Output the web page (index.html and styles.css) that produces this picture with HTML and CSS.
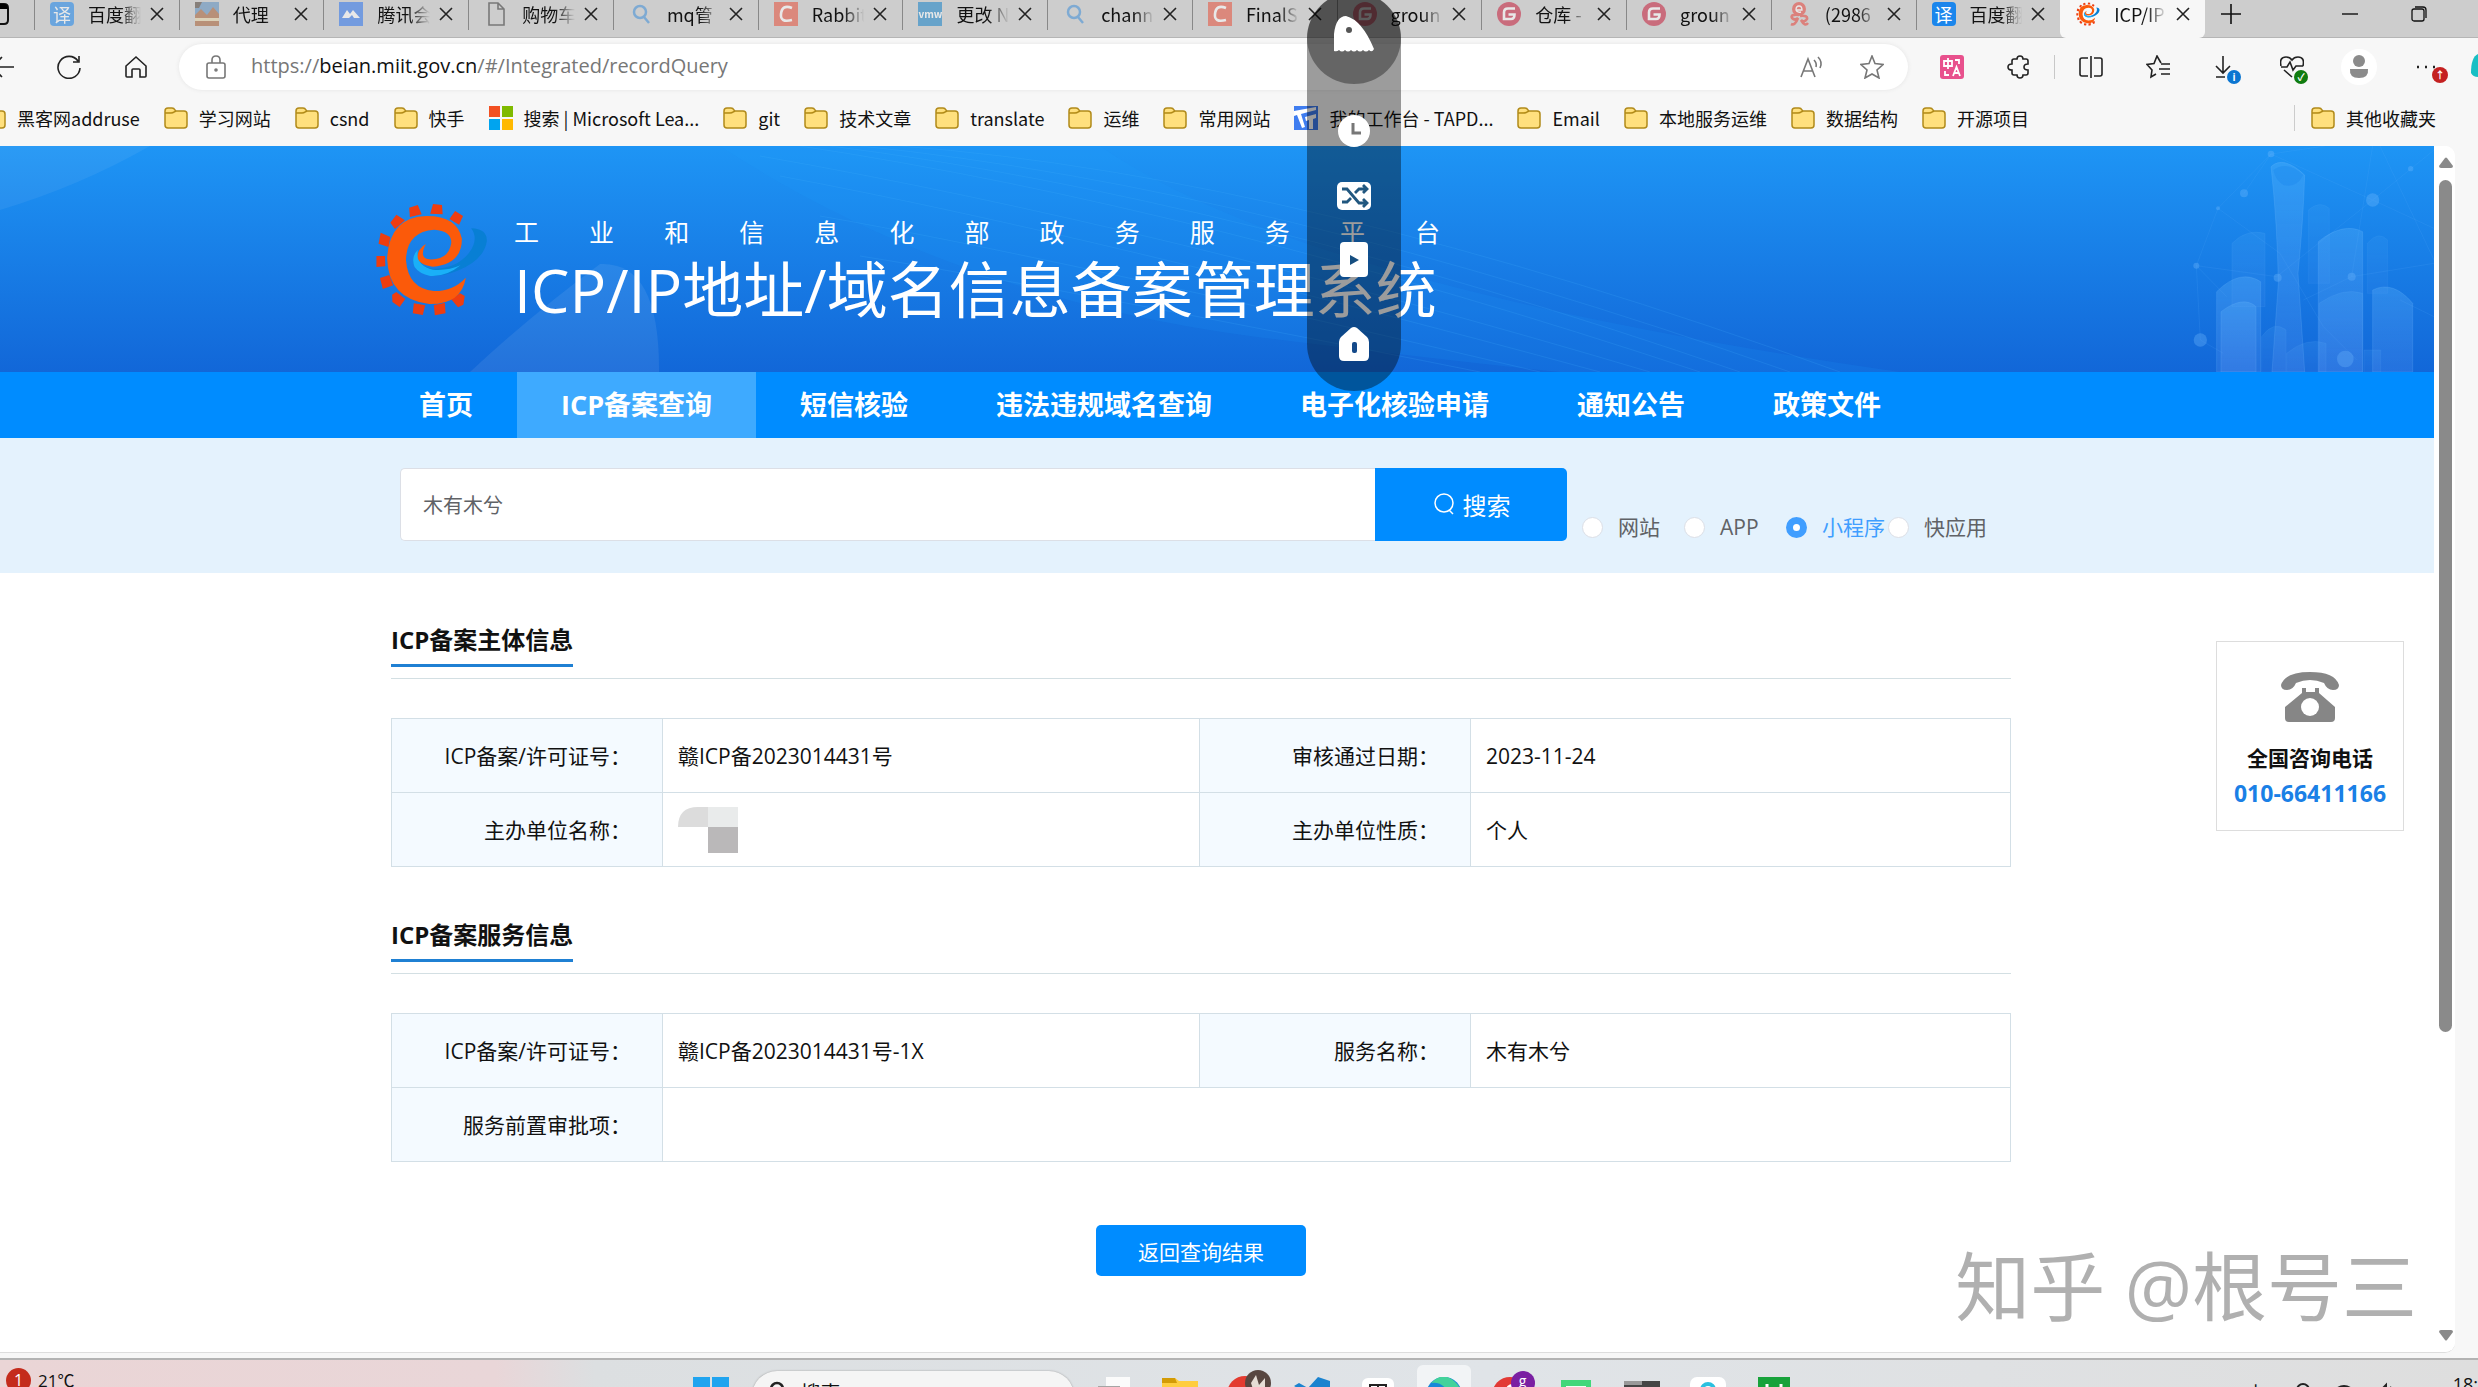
FILE: index.html
```html
<!DOCTYPE html>
<html lang="zh">
<head>
    <meta charset="UTF-8">
    <title>ICP/IP地址/域名信息备案管理系统</title>
    <link rel="stylesheet" href="styles.css">
</head>
<body>
<svg class="defs" aria-hidden="true">
    <symbol id="close" viewBox="0 0 14 14"><path d="M1 1L13 13M13 1L1 13" fill="none" stroke="#222" stroke-width="1.6"/></symbol>
    <symbol id="folder" viewBox="0 0 24 22"><path d="M1 4Q1 1 4 1H8Q10 1 11 3L12 4H20Q23 4 23 7V18Q23 21 20 21H4Q1 21 1 18Z" fill="#ffe07e" stroke="#b18a1a" stroke-width="1.5"/><path d="M1 6H7Q9 6 10 5L12 4" fill="#f8cf45" stroke="#b18a1a" stroke-width="1.5"/></symbol>
    <symbol id="glass" viewBox="0 0 24 24"><circle cx="11" cy="10" r="6" fill="none" stroke="#3f8fd8" stroke-width="2.5"/><path d="M15 15L20 21" stroke="#3f8fd8" stroke-width="2.5"/></symbol>
    <symbol id="gitee" viewBox="0 0 24 24"><circle cx="12" cy="12" r="12" fill="#c71d3a"/><path d="M18 6.500H11Q7 6.500 7 10.500V17H14Q17.500 17 17.500 12.500H11.500" fill="none" stroke="#fff" stroke-width="2.600"/></symbol>
    <symbol id="csdn" viewBox="0 0 24 24"><rect width="24" height="24" fill="#e8503a"/><path d="M18 6Q8 2 7 12Q6 21 18 18" fill="none" stroke="#fff" stroke-width="2.600"/></symbol>
    <symbol id="logo" viewBox="70 155 320 345" preserveAspectRatio="none">
        <g fill="#ee3d10">
            <path d="M166 172L190 164L201 192L168 200Z"/><path d="M233 161L258 164L260 192L225 190Z"/><path d="M295 182L317 197L306 223L279 206Z"/>
            <path d="M130 193L154 210L126 236L113 217Z"/><path d="M86 247L113 260L108 290L80 280Z"/><path d="M74 317L98 317L99 348L74 350Z"/>
            <path d="M84 383L110 374L121 405L92 416Z"/><path d="M118 433L130 425L155 446L139 470L119 455Z"/><path d="M179 459L211 465L204 494L176 489Z"/>
            <path d="M235 464L266 458L268 489L238 495Z"/><path d="M284 447L309 429L322 437L318 463L303 471Z"/>
        </g>
        <path d="M340 234Q384 235 384 272Q376 330 300 362Q220 395 181 350Q170 320 190 298Q186 348 232 355Q300 356 335 306Q362 266 340 234Z" fill="#087fd4"/>
        <path d="M181 350Q170 320 190 298Q186 348 232 358Q275 362 310 345Q270 380 225 377Q194 370 181 350Z" fill="#1ab0f8"/>
        <path d="M325 382Q312 463 222 461Q108 445 104 325Q110 200 214 197Q300 196 314 265Q314 342 232 349Q176 340 194 300Q202 286 213 281Q192 323 222 327Q276 330 284 279Q286 241 236 238Q158 244 157 330Q163 415 235 422Q289 423 325 382Z" fill="#fb5a0a"/>
    </symbol>
</svg>

<div class="tabs">
    <div class="tabs-edge"><svg width="9" height="26" viewBox="0 0 9 26"><path d="M0 4H4Q8 4 8 8V20Q8 24 4 24H0" fill="none" stroke="#111" stroke-width="2"/><path d="M0 4H4Q8 4 8 9H0Z"/></svg></div>
    <div class="tab"><span class="fav yi">译</span><span class="name">百度翻</span><button aria-label="关闭"><svg><use href="#close"/></svg></button></div>
    <div class="tab"><svg class="fav" viewBox="0 0 24 24"><rect width="24" height="24" fill="#5b8fc0"/><path d="M0 13L6 7L12 13L18 5L24 12V24H0Z" fill="#a75f33"/><path d="M0 16H24V19H0Z" fill="#e8d6a8"/><path d="M0 0H7L4 6H0Z" fill="#4d4038"/></svg><span class="name">代理</span><button aria-label="关闭"><svg><use href="#close"/></svg></button></div>
    <div class="tab"><svg class="fav" viewBox="0 0 24 24"><rect width="24" height="24" fill="#2b73ee"/><path d="M3 16L8 8L11 12L14 8L21 16H15L13 13L10 16Z" fill="#fff"/></svg><span class="name">腾讯会</span><button aria-label="关闭"><svg><use href="#close"/></svg></button></div>
    <div class="tab"><svg class="fav" viewBox="0 0 24 24"><path d="M5 1H14L20 7V23H5ZM14 1V7H20" fill="none" stroke="#333" stroke-width="1.600"/></svg><span class="name">购物车</span><button aria-label="关闭"><svg><use href="#close"/></svg></button></div>
    <div class="tab"><svg class="fav"><use href="#glass"/></svg><span class="name">mq管</span><button aria-label="关闭"><svg><use href="#close"/></svg></button></div>
    <div class="tab"><svg class="fav"><use href="#csdn"/></svg><span class="name">Rabbit</span><button aria-label="关闭"><svg><use href="#close"/></svg></button></div>
    <div class="tab"><span class="fav vmw">vmw</span><span class="name">更改 N</span><button aria-label="关闭"><svg><use href="#close"/></svg></button></div>
    <div class="tab"><svg class="fav"><use href="#glass"/></svg><span class="name">chann</span><button aria-label="关闭"><svg><use href="#close"/></svg></button></div>
    <div class="tab"><svg class="fav"><use href="#csdn"/></svg><span class="name">FinalS</span><button aria-label="关闭"><svg><use href="#close"/></svg></button></div>
    <div class="tab"><svg class="fav"><use href="#gitee"/></svg><span class="name">groun</span><button aria-label="关闭"><svg><use href="#close"/></svg></button></div>
    <div class="tab"><svg class="fav"><use href="#gitee"/></svg><span class="name">仓库 -</span><button aria-label="关闭"><svg><use href="#close"/></svg></button></div>
    <div class="tab"><svg class="fav"><use href="#gitee"/></svg><span class="name">groun</span><button aria-label="关闭"><svg><use href="#close"/></svg></button></div>
    <div class="tab"><svg class="fav" viewBox="0 0 24 24"><circle cx="12" cy="7" r="7" fill="#e8443a"/><path d="M9 8H15Q15 4 12 4Q9 4 9 8Q10 11 14 10" fill="none" stroke="#fff" stroke-width="1.300"/><path d="M12 13Q3 12 5 16Q8 19 11 16Q8 24 4 22M13 14Q21 13 20 17Q17 21 14 18Q18 25 21 21" fill="none" stroke="#e8443a" stroke-width="2.600"/></svg><span class="name">(2986</span><button aria-label="关闭"><svg><use href="#close"/></svg></button></div>
    <div class="tab lit"><span class="fav yi">译</span><span class="name">百度翻</span><button aria-label="关闭"><svg><use href="#close"/></svg></button></div>
    <div class="tab active"><svg class="fav"><use href="#logo"/></svg><span class="name">ICP/IP</span><button aria-label="关闭"><svg><use href="#close"/></svg></button></div>
    <div class="window-btns">
        <button aria-label="新建标签页"><svg width="22" height="22" viewBox="0 0 22 22"><path d="M11 1V21M1 11H21" stroke="#111" stroke-width="1.600"/></svg></button>
        <button class="min" aria-label="最小化"><svg width="16" height="16" viewBox="0 0 16 16"><path d="M0 8H16" stroke="#111" stroke-width="1.400"/></svg></button>
        <button aria-label="还原"><svg width="16" height="16" viewBox="0 0 16 16"><rect x="1" y="3" width="12" height="12" rx="2" fill="none" stroke="#111" stroke-width="1.300"/><path d="M4 1H12Q15 1 15 4V12" fill="none" stroke="#111" stroke-width="1.300"/></svg></button>
    </div>
</div>

<div class="toolbar">
    <button aria-label="后退"><svg viewBox="0 0 24 24"><path d="M24 12H2M12 2L2 12L12 22"/></svg></button>
    <button aria-label="刷新"><svg viewBox="0 0 24 24"><path d="M21 6A11 11 0 1 0 23 13M22 1V7H16"/></svg></button>
    <button aria-label="主页"><svg viewBox="0 0 24 24"><path d="M2 11L12 2L22 11V21Q22 22 21 22H16V15Q16 14 15 14H9Q8 14 8 15V22H3Q2 22 2 21Z"/></svg></button>
    <div class="address">
        <svg class="grey" viewBox="0 0 24 24"><rect x="3" y="8" width="18" height="15" rx="2"/><path d="M8 8V5Q8 1 12 1Q16 1 16 5V8"/><circle cx="12" cy="15" r="1"/></svg>
        <span class="url">https://<b>beian.miit.gov.cn</b>/#/Integrated/recordQuery</span>
        <button aria-label="朗读"><svg class="grey" viewBox="0 0 24 24"><path d="M1 22L8 4L15 22M3 16H13M14 5Q17 8 16 12M18 2Q23 7 20 13"/></svg></button>
        <button aria-label="收藏"><svg class="grey" viewBox="0 0 24 24"><path d="M12 1L15 8.500L23 9.500L17 15L19 23L12 19L5 23L7 15L1 9.500L9 8.500Z"/></svg></button>
    </div>
    <button aria-label="翻译"><svg viewBox="0 0 24 24"><rect width="24" height="24" rx="3" fill="#e8518d" stroke="none"/><path d="M4 6H12V11H4ZM8 3V14M15 5H19V9M5 16V20H9M13 21L16.500 12L20 21M14 18H19" stroke="#fff" stroke-width="1.800"/></svg></button>
    <button aria-label="扩展"><svg viewBox="0 0 24 24"><path d="M7 4H10Q10 1 13 1Q16 1 16 4H19Q21 4 21 6V9Q17 9 17 12Q17 15 21 15V18Q21 20 19 20H16Q16 23 13 23Q10 23 10 20H7Q5 20 5 18V15Q1 15 1 12Q1 9 5 9V6Q5 4 7 4Z"/></svg></button>
    <i class="line"></i>
    <button aria-label="分屏"><svg viewBox="0 0 24 24"><path d="M9 3H3Q1 3 1 5V19Q1 21 3 21H9M15 3H21Q23 3 23 5V19Q23 21 21 21H15M12 1V23"/></svg></button>
    <button aria-label="收藏夹"><svg viewBox="0 0 24 24"><path d="M15 8L11 1L8 8.500L1 9.500L6 15L5 22L10 19M15 9H24M13 14H24M15 19H24"/></svg></button>
    <button aria-label="下载"><svg viewBox="0 0 24 24"><path d="M10 1V18M3 11L10 18L17 11M3 22H12"/></svg><em class="dot blue">i</em></button>
    <button aria-label="浏览器概要"><svg viewBox="0 0 24 24"><path d="M1 11Q-1 2 6 2Q10 2 12 5Q14 2 18 2Q25 2 23 11M1 12H7L10 7L13 15L16 11H23M4 15L12 22"/></svg><em class="dot green">✓</em></button>
    <button aria-label="用户"><svg class="avatar" viewBox="0 0 36 36"><circle cx="18" cy="18" r="18" fill="#fff"/><circle cx="18" cy="12" r="6" fill="#8b8b8b"/><path d="M9 20H27Q28 29 18 29Q8 29 9 20Z" fill="#8b8b8b"/></svg></button>
    <button aria-label="更多"><svg viewBox="0 0 24 24"><path d="M3 12H5M11 12H13M19 12H21" stroke-width="2.500"/></svg><em class="dot red">↑</em></button>
    <svg class="copilot" width="19" height="36" viewBox="0 0 19 36"><path d="M19 5Q12 8 12 24Q14 28 19 28Z" fill="#19bfc4"/></svg>
</div>

<div class="bookmarks">
    <a href="#"><svg><use href="#folder"/></svg>黑客网addruse</a>
    <a href="#"><svg><use href="#folder"/></svg>学习网站</a>
    <a href="#"><svg><use href="#folder"/></svg>csnd</a>
    <a href="#"><svg><use href="#folder"/></svg>快手</a>
    <a href="#"><svg viewBox="0 0 24 24"><path d="M0 0H11V11H0Z" fill="#f25022"/><path d="M13 0H24V11H13Z" fill="#7fba00"/><path d="M0 13H11V24H0Z" fill="#00a4ef"/><path d="M13 13H24V24H13Z" fill="#ffb900"/></svg>搜索 | Microsoft Lea...</a>
    <a href="#"><svg><use href="#folder"/></svg>git</a>
    <a href="#"><svg><use href="#folder"/></svg>技术文章</a>
    <a href="#"><svg><use href="#folder"/></svg>translate</a>
    <a href="#"><svg><use href="#folder"/></svg>运维</a>
    <a href="#"><svg><use href="#folder"/></svg>常用网站</a>
    <a href="#"><svg viewBox="0 0 24 24"><rect width="24" height="24" fill="#3f7df0"/><path d="M0 5L22 1V4L7 8L11 21L8 22L3 9L0 10ZM11 11L22 8V12L19 13V23H15V14L12 15Z" fill="#fff"/></svg>我的工作台 - TAPD...</a>
    <a href="#"><svg><use href="#folder"/></svg>Email</a>
    <a href="#"><svg><use href="#folder"/></svg>本地服务运维</a>
    <a href="#"><svg><use href="#folder"/></svg>数据结构</a>
    <a href="#"><svg><use href="#folder"/></svg>开源项目</a>
    <a href="#" class="others"><svg><use href="#folder"/></svg>其他收藏夹</a>
</div>

<div class="view">
    <div class="page">
        <header class="banner">
            <svg class="waves" viewBox="0 0 2434 226" preserveAspectRatio="none">
                <path d="M470 226Q530 170 600 118Q660 115 659 226Z" fill="#fff" opacity=".08"/>
                <path d="M0 0H150Q80 40 0 64Z" fill="#fff" opacity=".06"/>
                <path d="M720 0Q950 150 1250 190Q1450 215 1560 226H1900Q1300 140 1100 0Z" fill="#22a5ff" opacity=".13"/>
                <g fill="none" stroke="#4ab8ff" opacity=".16">
                    <path d="M800 0Q1200 60 1700 226"/><path d="M830 0Q1230 50 1740 226"/><path d="M860 0Q1260 40 1790 226"/><path d="M760 10Q1160 80 1650 226"/><path d="M780 30Q1100 90 1600 226"/><path d="M900 0Q1300 30 1840 226"/><path d="M820 70Q1050 110 1540 226"/><path d="M860 110Q1050 140 1480 226"/>
                </g>
            </svg>
            <svg class="emblem"><use href="#logo"/></svg>
            <div class="titles">
                <p>工业和信息化部政务服务平台</p>
                <h1>ICP/IP地址/域名信息备案管理系统</h1>
            </div>
            <svg class="city" viewBox="0 18 882 678">
                <defs><linearGradient id="tower" x2="0" y2="1"><stop offset="0" stop-color="#6cc0ff" stop-opacity=".35"/><stop offset="1" stop-color="#7fa9ff" stop-opacity=".22"/></linearGradient></defs>
                <g stroke="#68b8ff" stroke-opacity=".25" stroke-width="2" fill="none">
                    <path d="M393 42L234 205L169 377L181 600L250 640M234 205L420 340L550 560L650 660M393 42L698 180L882 265M555 18L393 42M698 180L882 30M720 18L882 360M698 180L410 410L169 377M698 18L635 410L490 480M635 410L882 370M780 480L882 530M169 377L260 470M312 160L393 42"/>
                </g>
                <g fill="url(#tower)" stroke="#7fc4ff" stroke-opacity=".25" stroke-width="3">
                    <path d="M276 310Q320 265 375 280V500H276Z" opacity=".5"/><path d="M505 210Q540 180 568 205V430H505Z" opacity=".4"/><path d="M682 310Q715 270 743 300V460H682Z" opacity=".4"/>
                    <path d="M393 80Q430 45 494 105Q490 240 474 400L494 696H396L415 430Q412 250 393 80Z"/>
                    <path d="M230 455Q300 385 362 425V696H230Z"/><path d="M243 515Q310 465 348 500V696H243Z"/>
                    <path d="M535 305Q610 245 668 275V696H535Z"/><path d="M537 490Q610 440 668 460V696H537Z" opacity=".6"/>
                    <path d="M698 450Q760 420 818 490V696H698Z"/><path d="M365 590Q400 540 438 570V696H365Z" opacity=".5"/><path d="M440 640Q500 590 558 610V696H440Z" opacity=".5"/><path d="M672 630H722V696H672Z" opacity=".5"/>
                </g>
                <path d="M400 90Q440 60 490 105Q470 145 430 135Q405 120 400 90Z" fill="#1c85ea" opacity=".4"/>
                <g fill="#7dc0ff" opacity=".4"><circle cx="393" cy="42" r="10"/><circle cx="312" cy="160" r="12"/><circle cx="234" cy="205" r="6"/><circle cx="169" cy="377" r="9"/><circle cx="181" cy="600" r="20"/><circle cx="698" cy="180" r="20"/><circle cx="812" cy="86" r="8"/><circle cx="413" cy="413" r="12"/><circle cx="635" cy="410" r="12"/><circle cx="616" cy="657" r="25"/></g>
            </svg>
        </header>
        <nav class="nav">
            <a href="#">首页</a>
            <a href="#" class="current">ICP备案查询</a>
            <a href="#">短信核验</a>
            <a href="#">违法违规域名查询</a>
            <a href="#">电子化核验申请</a>
            <a href="#">通知公告</a>
            <a href="#">政策文件</a>
        </nav>
        <form class="search">
            <input type="text" value="木有木兮" aria-label="搜索内容">
            <button type="button"><svg width="24" height="24" viewBox="0 0 24 24"><circle cx="12" cy="11" r="9" fill="none" stroke="#fff" stroke-width="1.500"/><path d="M17 18L21 22" stroke="#fff" stroke-width="1.500"/></svg>搜索</button>
            <div class="types">
                <label><input type="radio" name="type">网站</label>
                <label><input type="radio" name="type">APP</label>
                <label><input type="radio" name="type" checked>小程序</label>
                <label><input type="radio" name="type">快应用</label>
            </div>
        </form>
        <main>
            <section>
                <div class="head"><h2>ICP备案主体信息</h2></div>
                <table>
                    <tr><th>ICP备案/许可证号：</th><td class="val">赣ICP备2023014431号</td><th>审核通过日期：</th><td>2023-11-24</td></tr>
                    <tr><th>主办单位名称：</th><td><svg class="mosaic" width="60" height="46" viewBox="0 0 60 46"><path d="M0 20Q0 0 20 0H30V20Z" fill="#dcdcdc"/><path d="M30 0H60V20H30Z" fill="#e9ebeb"/><path d="M30 20H60V46H30Z" fill="#bab8b9"/></svg></td><th>主办单位性质：</th><td>个人</td></tr>
                </table>
            </section>
            <section>
                <div class="head"><h2>ICP备案服务信息</h2></div>
                <table>
                    <tr><th>ICP备案/许可证号：</th><td class="val">赣ICP备2023014431号-1X</td><th>服务名称：</th><td>木有木兮</td></tr>
                    <tr><th>服务前置审批项：</th><td colspan="3"></td></tr>
                </table>
            </section>
            <button class="back">返回查询结果</button>
        </main>
        <aside class="phone">
            <svg width="58" height="50" viewBox="0 0 58 50"><path d="M0 13Q4 0 29 0Q54 0 58 13Q58 18 52 18Q46 18 43 11Q36 8 29 8Q22 8 15 11Q12 18 6 18Q0 18 0 13Z" fill="#868686"/><path d="M21 16H25V20H34V16H38V21L54 35V46Q54 50 50 50H8Q4 50 4 46V35L21 21Z" fill="#868686"/><circle cx="29" cy="35" r="9" fill="#fff"/></svg>
            <h3>全国咨询电话</h3>
            <strong>010-66411166</strong>
        </aside>
        <div class="mark">知乎 @根号三</div>
    </div>
    <div class="scroll">
        <svg width="14" height="11" viewBox="0 0 14 11"><path d="M6 1Q7 0 8 1L14 9Q14 11 12 11H2Q0 11 0 9Z" fill="#8a8a8a"/></svg>
        <div class="track"><div class="thumb"></div></div>
        <svg width="14" height="11" viewBox="0 0 14 11"><path d="M6 10Q7 11 8 10L14 2Q14 0 12 0H2Q0 0 0 2Z" fill="#8a8a8a"/></svg>
    </div>
</div>

<footer class="taskbar">
    <div class="weather"><b>1</b>21℃</div>
    <div class="apps">
        <svg viewBox="0 0 36 30"><path d="M0 0H17V17H0ZM19 0H36V17H19Z" fill="#20a4ef"/></svg>
        <div class="find"><svg width="16" height="16" viewBox="0 0 16 16"><circle cx="8" cy="8" r="6" fill="none" stroke="#222" stroke-width="2.500"/></svg>搜索</div>
        <svg viewBox="0 0 36 30"><path d="M10 0H34V20H10Z" fill="#fbfbfb"/><path d="M2 9H24V30H2Z" fill="#a5a5a5"/></svg>
        <svg viewBox="0 0 36 30"><path d="M0 1H13L17 4H36V30H0Z" fill="#ffcd3f"/><path d="M0 1H13L15 6H0Z" fill="#d39b06"/></svg>
        <span class="photo"><svg viewBox="0 0 45 36"><circle cx="18" cy="24" r="18" fill="#e33b30"/><circle cx="31" cy="13" r="13" fill="#584640"/><path d="M24 13L29 5L32 15L38 8V19H26Z" fill="#e6ddd5"/></svg></span>
        <svg viewBox="0 0 36 30"><path d="M24 0L36 4V30L0 9L5 6L14 11Z" fill="#1b83cf"/></svg>
        <svg viewBox="0 0 36 30"><rect x="2" y="1" width="32" height="32" rx="6" fill="#fff"/><path d="M10 8H26V14H10ZM18 8V18" fill="none" stroke="#222" stroke-width="2"/></svg>
        <span class="on"><svg viewBox="0 0 36 30"><circle cx="18" cy="18" r="18" fill="#1689d8"/><path d="M5 6Q18 -8 32 8Q38 18 24 19Q18 4 5 6Z" fill="#43d29b"/></svg></span>
        <span class="chat"><svg viewBox="0 0 36 30"><circle cx="18" cy="18" r="18" fill="#e23a35"/><circle cx="20" cy="13" r="6" fill="#fff"/></svg><em>g</em></span>
        <svg viewBox="0 0 36 30"><rect x="3" y="3" width="30" height="28" fill="#42d77a"/><path d="M8 9H28V12H8Z" fill="#f1fff5"/></svg>
        <svg viewBox="0 0 36 30"><path d="M0 4H36V30H0Z" fill="#454545"/><path d="M0 4H18V8H0Z" fill="#999"/></svg>
        <svg viewBox="0 0 36 30"><rect width="36" height="36" rx="7" fill="#fff"/><circle cx="18" cy="13" r="6" fill="none" stroke="#2bc0df" stroke-width="4"/></svg>
        <svg viewBox="0 0 36 30"><path d="M2 0H34V30H2Z" fill="#18a23b"/><path d="M11 14V7M25 14V7" fill="none" stroke="#fff" stroke-width="3"/></svg>
    </div>
    <div class="tray"><span class="ime">中</span><svg width="16" height="12" viewBox="0 0 16 12"><circle cx="8" cy="9" r="6" fill="none" stroke="#222" stroke-width="2"/></svg><svg width="22" height="12" viewBox="0 0 22 12"><path d="M1 10Q11 0 21 10" fill="none" stroke="#222" stroke-width="2"/></svg><svg width="18" height="12" viewBox="0 0 18 12"><path d="M0 8H5L9 4V12M13 6Q16 8 15 12" fill="none" stroke="#222" stroke-width="2"/></svg><span class="clock">18:</span></div>
</footer>

<!-- floating capture tool -->
<div class="float">
    <div class="fish"><svg width="40" height="36" viewBox="0 0 40 36"><path d="M0 35V18Q2 0 12 0Q28 4 40 33Q38 37 35 34Q32 37 29 34Q26 37 23 34Q20 37 17 34Q14 37 11 34Q8 37 5 34Q3 36 0 35Z" fill="#fff"/><circle cx="15" cy="14" r="3" fill="#555"/></svg></div>
    <svg width="32" height="32" viewBox="0 0 32 32"><circle cx="16" cy="16" r="16" fill="#fff"/><path d="M15 8V18H23" fill="none" stroke="#777" stroke-width="3"/></svg>
    <svg class="s2" width="34" height="28" viewBox="0 0 34 28"><rect width="34" height="28" rx="5" fill="#fff"/><path d="M5 7H10L22 21H29M5 20H10L14 16M18 11L22 7H29M26 3L30 7L26 11M26 17L30 21L26 25" fill="none" stroke="#21577f" stroke-width="2.800"/></svg>
    <svg class="s3" width="28" height="35" viewBox="0 0 28 35"><rect width="28" height="35" rx="4" fill="#fff"/><path d="M10 13V23L19 18Z" fill="#164e80"/></svg>
    <svg class="s4" width="30" height="34" viewBox="0 0 30 34"><path d="M12 1Q15 -1 18 1L28 10Q30 12 30 15V29Q30 34 25 34H5Q0 34 0 29V15Q0 12 2 10Z" fill="#fff"/><rect x="13" y="15" width="5" height="11" rx="2" fill="#144a8a"/></svg>
</div>
</body>
</html>
```
FILE: styles.css
```css
* { box-sizing: border-box; }
body { margin: 0; height: 100vh; display: flex; flex-direction: column; overflow: hidden; position: relative; background: #f7f7f7; font-family: "Open Sans", "Noto Sans CJK SC", sans-serif; font-size: 18px; color: #111; }
button { border: 0; background: none; padding: 0; font-family: inherit; color: inherit; cursor: pointer; }
a { color: inherit; text-decoration: none; }
h1, h2, h3, p { margin: 0; }
.defs { position: absolute; width: 0; height: 0; }

/* tabs */
.tabs { display: flex; height: 38px; background: #cdcdcd; border-bottom: 1px solid #b5b5b5; font-family: "Noto Sans CJK SC", sans-serif; }
.tabs-edge { width: 34px; }
.tab { flex: 1; min-width: 0; height: 38px; display: flex; align-items: center; padding: 0 15px 10px 16px; background: linear-gradient(#888, #888) left top / 1px 30px no-repeat; }
.tab .fav { width: 24px; height: 24px; margin-right: 14px; flex: none; opacity: .55; }
.tab.lit .fav, .tab.active .fav { opacity: 1; }
.tab .name { flex: 1; white-space: nowrap; line-height: 28px; -webkit-mask-image: linear-gradient(90deg, #000 55%, transparent 90%); mask-image: linear-gradient(90deg, #000 55%, transparent 90%); }
.tab button { width: 14px; height: 14px; margin-left: 3px; display: flex; }
.tab button svg { width: 14px; height: 14px; }
.tab.active { background: #f7f7f7; border-radius: 0 0 6px 6px; }
.yi { background: #1b86ec; color: #fff; border-radius: 4px; font-size: 18px; line-height: 24px; text-align: center; }
.vmw { background: #1482c8; color: #fff; font-size: 10px; font-weight: bold; line-height: 24px; text-align: center; }
.window-btns { width: 273px; display: flex; align-items: center; padding: 0 51px 10px 15px; }
.window-btns button { display: flex; }
.window-btns .min { margin-left: auto; margin-right: 53px; }

/* address row */
.toolbar { display: flex; align-items: center; height: 58px; margin-left: -32px; flex: none; }
.toolbar > button { width: 67px; height: 36px; display: flex; align-items: center; justify-content: center; position: relative; flex: none; }
.toolbar svg { width: 24px; height: 24px; fill: none; stroke: #222; stroke-width: 1.6; }
.toolbar svg.grey { stroke: #777; }
.toolbar svg.avatar { width: 36px; height: 36px; stroke: none; }
.toolbar svg.copilot { width: 19px; height: 36px; stroke: none; }
.address { flex: 1; height: 46px; margin: 0 10px; padding: 0 24px 0 25px; display: flex; align-items: center; background: #fff; border-radius: 23px; box-shadow: 0 0 4px #e4e4e4; }
.address .url { flex: 1; margin-left: 23px; font-size: 20px; line-height: 26px; padding-bottom: 2px; color: #777; }
.address .url b { font-weight: normal; color: #111; }
.address button { margin-left: 36px; display: flex; }
.line { width: 1px; height: 24px; margin: 0 2px; background: #c8c8c8; }
.dot { position: absolute; left: 36px; top: 21px; width: 14px; height: 14px; border-radius: 50%; color: #fff; font-size: 10px; line-height: 14px; font-style: normal; font-weight: bold; text-align: center; }
.blue { background: #0b76d1; }
.green { background: #107c10; }
.red { background: #c42121; left: 40px; top: 18px; width: 16px; height: 16px; line-height: 16px; }

.bookmarks { display: flex; align-items: center; gap: 24px; height: 50px; padding-bottom: 6px; margin-left: -18px; flex: none; white-space: nowrap; font-family: "Noto Sans CJK SC", sans-serif; }
.bookmarks a { display: flex; align-items: center; gap: 11px; }
.bookmarks svg { width: 24px; height: 24px; flex: none; }
.bookmarks .others { margin-left: auto; margin-right: 42px; padding-left: 16px; border-left: 1px solid #ccc; }

/* page */
.view { flex: 1; min-height: 0; display: flex; margin: 0 23px 5px 0; background: #fff; border-radius: 0 10px 10px 0; border-bottom: 1px solid #ddd; overflow: hidden; }
.page { flex: 1; min-width: 0; position: relative; background: #fff; }
.banner { position: relative; display: flex; align-items: center; height: 226px; padding-left: 375px; background: linear-gradient(#1e95f5, #1267d8); color: #fff; }
.waves { position: absolute; left: 0; top: 0; width: 100%; height: 100%; }
.emblem { position: relative; width: 114px; height: 115px; margin-right: 25px; }
.titles { position: relative; width: 926px; padding-top: 24px; white-space: nowrap; }
.titles p { font-size: 25px; line-height: 38px; text-align: justify; text-align-last: justify; }
.titles h1 { font-size: 61px; line-height: 78px; font-weight: normal; }
.city { margin-left: auto; width: 294px; height: 226px; opacity: .75; }
.nav { display: flex; height: 66px; padding-left: 375px; background: #008cff; color: #fff; font-size: 27px; font-weight: bold; }
.nav a { padding: 0 44px; line-height: 66px; }
.nav .current { background: #3eaaff; }
.search { display: flex; align-items: center; height: 135px; padding: 0 444px 3px 400px; background: #e4f2fd; }
.search input[type=text] { flex: 1; min-width: 0; height: 73px; padding: 0 22px; border: 1px solid #dcdfe6; border-right: 0; border-radius: 5px 0 0 5px; background: #fff; font: inherit; font-size: 20px; color: #606266; }
.search button { width: 192px; height: 73px; display: flex; align-items: center; justify-content: center; gap: 7px; background: #008cff; color: #fff; font-size: 24px; border-radius: 0 5px 5px 0; }
.types { display: grid; grid-template-columns: repeat(4, 102px); margin-left: 15px; padding-top: 46px; font-size: 21px; color: #606266; white-space: nowrap; }
.types label { display: flex; align-items: center; line-height: 30px; }
.types input { appearance: none; width: 21px; height: 21px; margin: 0 15px 0 0; border: 1px solid #dcdfe6; border-radius: 50%; background: #fff; flex: none; }
.types input:checked { border: 7px solid #409eff; }
.types label:has(:checked) { color: #409eff; }

main { padding: 52px 423px 0 391px; }
section { margin-bottom: 53px; }
.head { padding-bottom: 11px; margin-bottom: 39px; border-bottom: 1px solid #d3dfe3; }
h2 { width: fit-content; padding-bottom: 9px; border-bottom: 3px solid #1f80d3; font-size: 24px; line-height: 30px; }
table { width: 100%; table-layout: fixed; border-collapse: collapse; font-size: 21px; line-height: 30px; }
th, td { height: 74px; padding: 0 15px; border: 1px solid #d3dfe6; text-align: left; }
th { width: 271px; padding: 0 31px 0 0; background: #f4faff; font-weight: normal; text-align: right; }
.val { width: 537px; }
.mosaic { display: block; }
.back { display: block; margin: 63px auto 0; width: 210px; height: 51px; background: #008cff; border-radius: 5px; color: #fff; font-size: 21px; }
.phone { position: absolute; right: 30px; top: 495px; width: 188px; height: 190px; padding-top: 30px; border: 1px solid #ddd; text-align: center; }
.phone svg { display: block; margin: 0 auto 20px; }
.phone h3 { font-size: 21px; line-height: 32px; }
.phone strong { font-size: 23px; line-height: 38px; color: #1a80e6; }
.mark { position: absolute; right: 17px; bottom: 11px; font-size: 75px; line-height: 110px; color: #b0b0b0; }

.scroll { width: 21px; padding: 11px 3px 11px 5px; display: flex; flex-direction: column; background: #fff; }
.track { flex: 1; padding: 12px 0 14px; }
.thumb { height: 75%; border-radius: 7px; background: #8a8a8a; }

.taskbar { display: flex; height: 29px; flex: none; overflow: hidden; border-top: 2px solid #b3b3b3; background: linear-gradient(90deg, #ead5d6, #e9d6d8 20%, #dcdfe1 24%, #e0e4e8 60%, #dedede); }
.weather, .tray { flex: 1; display: flex; }
.weather { padding: 8px 0 0 6px; gap: 7px; font-size: 17px; line-height: 26px; }
.weather b { width: 25px; height: 25px; border-radius: 50%; background: #c42b1c; color: #fff; font-size: 16px; line-height: 25px; text-align: center; font-weight: normal; }
.apps { display: flex; }
.apps > svg, .on, .chat { width: 36px; height: 30px; margin: 17px 15px 0; flex: none; }
.find { width: 322px; height: 50px; margin: 11px 7px 0 8px; padding: 10px 17px; display: flex; gap: 16px; border-radius: 25px; background: #f5f5f5; box-shadow: 0 0 2px #999; font-size: 20px; line-height: 26px; flex: none; }
.photo { width: 66px; padding: 10px 0 0 14px; }
.photo svg { display: block; width: 45px; height: 36px; }
.on { width: 54px; margin: 5px 6px 0; padding: 12px 9px 0; border-radius: 6px; background: #f2f4f6; }
.on svg, .chat svg { display: block; width: 36px; height: 30px; }
.chat { position: relative; }
.chat em { position: absolute; left: 19px; top: -6px; width: 24px; height: 24px; border-radius: 50%; background: #7a1fa2; color: #fff; font-size: 14px; line-height: 20px; font-style: normal; text-align: center; }
.tray { justify-content: flex-end; gap: 22px; line-height: 24px; padding-top: 21px; }
.tray .ime { margin-right: 8px; }
.tray .clock { margin: -9px 0 0 36px; }

/* floating tool */
.float { position: absolute; left: 1307px; top: -8px; width: 94px; height: 399px; display: flex; flex-direction: column; align-items: center; border-radius: 47px; background: rgba(0, 0, 0, .39); }
.fish { width: 94px; height: 92px; margin-bottom: 31px; padding-top: 24px; border-radius: 50%; background: rgba(0, 0, 0, .35); text-align: center; }
.s2 { margin-top: 35px; }
.s3 { margin-top: 32px; }
.s4 { margin-top: 50px; }
```
